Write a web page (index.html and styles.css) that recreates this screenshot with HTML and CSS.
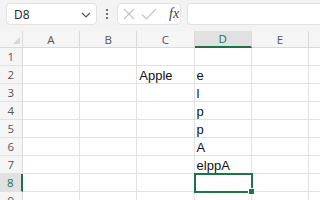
FILE: index.html
```html
<!DOCTYPE html>
<html>
<head>
<meta charset="utf-8">
<link rel="stylesheet" href="styles.css">
</head>
<body>
<div class="app">
  <div class="toolbar">
    <div class="namebox">
      <span class="name">D8</span>
      <svg class="chev" width="10" height="6" viewBox="0 0 10 6"><path d="M1 1 L5 5 L9 1" fill="none" stroke="#555" stroke-width="1.2"/></svg>
    </div>
    <div class="dots"><i></i><i></i><i></i></div>
    <div class="fbtns">
      <svg width="14" height="14" viewBox="0 0 14 14"><path d="M2 2 L12 12 M12 2 L2 12" stroke="#c4c4c4" stroke-width="1.2"/></svg>
      <svg width="16" height="14" viewBox="0 0 16 14"><path d="M1 7.5 L5.5 12 L15 2" fill="none" stroke="#c4c4c4" stroke-width="1.2"/></svg>
      <span class="fx">fx</span>
    </div>
    <div class="formula"></div>
  </div>
  <div class="sheet">
    <div class="corner"><span class="tri"></span></div>
    <div class="ch">A</div><div class="ch">B</div><div class="ch">C</div><div class="ch sel">D</div><div class="ch">E</div><div class="ch last"></div>

    <div class="rh">1</div><div class="c"></div><div class="c"></div><div class="c"></div><div class="c"></div><div class="c"></div><div class="c last"></div>
    <div class="rh">2</div><div class="c"></div><div class="c"></div><div class="c">Apple</div><div class="c">e</div><div class="c"></div><div class="c last"></div>
    <div class="rh">3</div><div class="c"></div><div class="c"></div><div class="c"></div><div class="c">l</div><div class="c"></div><div class="c last"></div>
    <div class="rh">4</div><div class="c"></div><div class="c"></div><div class="c"></div><div class="c">p</div><div class="c"></div><div class="c last"></div>
    <div class="rh">5</div><div class="c"></div><div class="c"></div><div class="c"></div><div class="c">p</div><div class="c"></div><div class="c last"></div>
    <div class="rh">6</div><div class="c"></div><div class="c"></div><div class="c"></div><div class="c">A</div><div class="c"></div><div class="c last"></div>
    <div class="rh">7</div><div class="c"></div><div class="c"></div><div class="c"></div><div class="c">elppA</div><div class="c"></div><div class="c last"></div>
    <div class="rh sel">8</div><div class="c"></div><div class="c"></div><div class="c"></div><div class="c active"></div><div class="c"></div><div class="c last"></div>
    <div class="rh">9</div><div class="c"></div><div class="c"></div><div class="c"></div><div class="c"></div><div class="c"></div><div class="c last"></div>
  </div>
</div>
</body>
</html>
```
FILE: styles.css
```css
* { box-sizing: border-box; }
html, body { margin: 0; padding: 0; }
body {
  width: 320px; height: 200px; overflow: hidden;
  background: #ffffff;
  font-family: "Liberation Sans", Arial, sans-serif;
}
.app { width: 320px; height: 200px; overflow: hidden; }
.toolbar {
  height: 31px;
  background: #f3f3f3;
  display: flex;
  align-items: flex-start;
  padding: 3px 0 0 6px;
}
.namebox {
  width: 91px; height: 22px;
  background: #fff;
  border: 1px solid #e2e2e2;
  border-radius: 4px;
  display: flex; align-items: center; justify-content: space-between;
  padding: 0 5px 0 7px;
}
.name { font-family: "Open Sans", sans-serif; font-size: 12px; color: #222; }
.chev { margin-top: 1px; }
.dots {
  width: 20px; height: 22px;
  display: flex; flex-direction: column; align-items: center; justify-content: center; gap: 2px;
}
.dots i { display: block; width: 2px; height: 2px; background: #444; border-radius: 1px; }
.fbtns {
  width: 64px; height: 22px;
  background: #fff;
  border: 1px solid #e2e2e2;
  border-radius: 4px;
  display: flex; align-items: center;
  padding-left: 4px; gap: 5px;
}
.fx {
  font-family: "Liberation Serif", serif; font-style: italic;
  font-size: 14px; color: #444; margin-left: 7px;
}
.formula {
  flex: 1; height: 22px; margin-left: 6px;
  background: #fff;
  border: 1px solid #e2e2e2;
  border-top-left-radius: 4px; border-bottom-left-radius: 4px;
  border-right: none;
}
.sheet {
  display: grid;
  grid-template-columns: 22.7px repeat(5, 57.3px) 1fr;
  grid-template-rows: 17px repeat(9, 18px);
}
.corner {
  background: #f5f5f5;
  border-right: 1px solid #dadada; border-bottom: 1px solid #dadada;
  position: relative;
}
.tri {
  position: absolute; right: 2px; bottom: 3px;
  width: 0; height: 0;
  border-left: 7px solid transparent;
  border-bottom: 7px solid #d6d6d6;
}
.ch {
  background: #f5f5f5;
  border-right: 1px solid #dadada; border-bottom: 1px solid #dadada;
  font-family: "Open Sans", sans-serif; font-size: 11.5px; color: #555;
  display: flex; align-items: center; justify-content: center;
}
.ch.sel {
  background: #e1e1e1; color: #1e7145;
  border-bottom: 2px solid #1e7145;
}
.ch.last { border-right: none; }
.rh {
  background: #f5f5f5;
  border-right: 1px solid #dadada; border-bottom: 1px solid #e2e2e2;
  font-family: "Open Sans", sans-serif; font-size: 11.5px; color: #555;
  display: flex; align-items: center; justify-content: center;
}
.rh.sel {
  background: #e1e1e1; color: #1e7145;
  border-right: 2px solid #1e7145;
}
.c {
  border-right: 1px solid #e2e2e2; border-bottom: 1px solid #e2e2e2;
  font-size: 13px; color: #111;
  padding: 2px 0 0 2px;
  white-space: nowrap;
  line-height: 16px;
}
.c.last { border-right: none; }
.c.active {
  position: relative;
  outline: 2px solid #217346;
  outline-offset: -1px;
}
.c.active::after {
  content: "";
  position: absolute; right: -4px; bottom: -4px;
  width: 5px; height: 5px;
  background: #217346;
  border: 1px solid #fff;
  box-sizing: content-box;
}
```
